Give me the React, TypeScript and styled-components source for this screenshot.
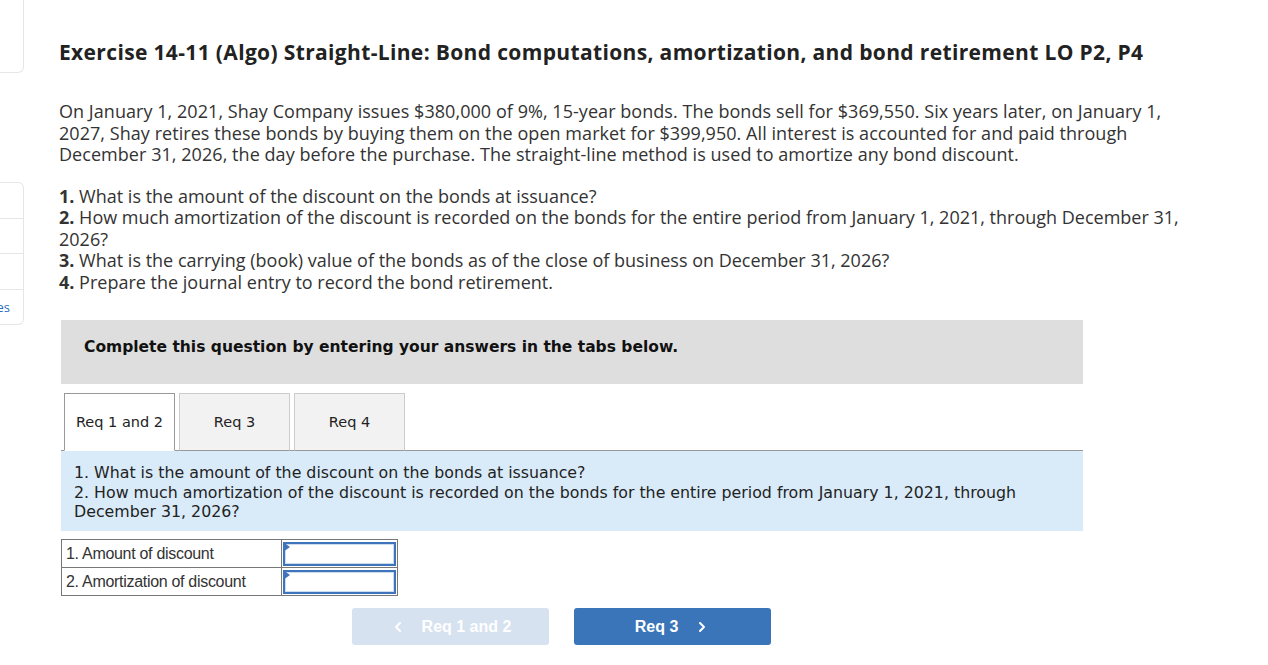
import styled, { createGlobalStyle } from 'styled-components';
import { ChevronLeft, ChevronRight } from 'lucide-react';

const GlobalStyle = createGlobalStyle`
  body {
    margin: 0;
    background: #fff;
    font-family: "Open Sans", "Liberation Sans", sans-serif;
    color: #333;
  }
`;

const Page = styled.div`
  display: flex;
  align-items: flex-start;
  width: 1268px;
  height: 665px;
  overflow: hidden;
`;

const Sidebar = styled.aside`
  width: 24px;
  flex-shrink: 0;
  display: flex;
  flex-direction: column;
`;

const SideCard = styled.div<{ $top: number; $height: number }>`
  margin-top: ${p => p.$top}px;
  height: ${p => p.$height}px;
  border: 1px solid #e6e6e6;
  border-left: none;
  border-radius: 0 6px 6px 0;
  box-sizing: border-box;
  display: flex;
  flex-direction: column;
`;

const SideRow = styled.div`
  flex: 1;
  border-top: 1px solid #e6e6e6;
  display: flex;
  align-items: center;
  justify-content: flex-end;
  overflow: hidden;
  padding-right: 13px;
  font-size: 13px;
  color: #2c6fbb;
  white-space: nowrap;

  &:first-child {
    border-top: none;
  }
`;

const Main = styled.main`
  margin-left: 35px;
  width: 1180px;
  padding-top: 38px;
`;

const Title = styled.h1`
  margin: 0;
  font-size: 21px;
  letter-spacing: 0.35px;
  line-height: 28px;
  font-weight: 700;
  color: #222;
  white-space: nowrap;
`;

const Intro = styled.p`
  margin: 35px 0 0;
  font-size: 18px;
  letter-spacing: 0.05px;
  line-height: 21.5px;
  color: #333;
  white-space: nowrap;
`;

const Questions = styled.ol`
  list-style: none;
  margin: 20px 0 0;
  padding: 0;
  font-size: 18px;
  line-height: 21.5px;
  white-space: nowrap;

  b {
    font-weight: 700;
  }
`;

const Instruction = styled.div`
  margin: 27px 0 0 2px;
  width: 1022px;
  height: 64px;
  box-sizing: border-box;
  background: #dedede;
  padding: 17px 23px;
  font-family: "DejaVu Sans", Verdana, sans-serif;
  font-weight: 700;
  font-size: 15.5px;
  line-height: 20px;
  color: #111;
`;

const Workspace = styled.section`
  margin-left: 2px;
  width: 1022px;
  font-family: "DejaVu Sans", Verdana, sans-serif;
`;

const TabBar = styled.div`
  margin-top: 9px;
  display: flex;
  gap: 4px;
  padding-left: 3px;
  border-bottom: 1px solid #999;
`;

const Tab = styled.button<{ $active?: boolean }>`
  width: 111px;
  height: 58px;
  box-sizing: border-box;
  margin-bottom: -1px;
  border: 1px solid ${p => (p.$active ? '#999' : '#ccc')};
  border-bottom: ${p => (p.$active ? '1px solid #fff' : '1px solid #999')};
  background: ${p => (p.$active ? '#fff' : '#f2f2f2')};
  font-family: inherit;
  font-size: 14.5px;
  color: #222;
  padding: 0;
  cursor: pointer;
`;

const Prompt = styled.div`
  background: #d9ebf9;
  height: 80px;
  box-sizing: border-box;
  padding: 12px 13px;
  font-size: 15.8px;
  line-height: 19.5px;
  color: #222;
  white-space: nowrap;
`;

const AnswerTable = styled.table`
  margin-top: 8px;
  border-collapse: collapse;
  font-family: "Liberation Sans", Arial, sans-serif;
  font-size: 16px;
  color: #333;
`;

const LabelCell = styled.td`
  width: 220px;
  height: 26px;
  box-sizing: border-box;
  border: 1px solid #777;
  padding: 1px 0 0 4px;
  letter-spacing: -0.3px;
`;

const InputCell = styled.td`
  width: 113px;
  height: 25px;
  padding: 1px;
  border: 1px solid #777;
`;

const InputWrap = styled.div`
  position: relative;
`;

const AmountInput = styled.input`
  display: block;
  width: 100%;
  height: 24px;
  box-sizing: border-box;
  border: 2px solid #3f74bb;
  outline: 1px solid #c9dcf1;
  outline-offset: -3px;
  background: #fff;
`;

const Marker = styled.span`
  position: absolute;
  z-index: 1;
  left: 0;
  top: 0;
  width: 0;
  height: 0;
  border-top: 5px solid transparent;
  border-bottom: 5px solid transparent;
  border-left: 7px solid #3f74bb;
`;

const NavRow = styled.div`
  margin: 12px 0 0 291px;
  display: flex;
  gap: 25px;
`;

const NavButton = styled.button<{ $disabled?: boolean }>`
  width: 197px;
  height: 37px;
  border: none;
  border-radius: 3px;
  background: ${p => (p.$disabled ? '#d6e2f0' : '#3a75b9')};
  color: #fff;
  font-family: "Liberation Sans", Arial, sans-serif;
  font-weight: 700;
  font-size: 16px;
  display: flex;
  align-items: center;
  justify-content: center;
  gap: 16px;
  cursor: pointer;
`;

function AnswerRow({ label }: { label: string }) {
  return (
    <tr>
      <LabelCell>{label}</LabelCell>
      <InputCell>
        <InputWrap>
          <AmountInput aria-label={label} />
          <Marker />
        </InputWrap>
      </InputCell>
    </tr>
  );
}

export default function App() {
  return (
    <Page>
      <GlobalStyle />
      <Sidebar>
        <SideCard $top={-10} $height={83} />
        <SideCard $top={109} $height={143}>
          <SideRow />
          <SideRow />
          <SideRow />
          <SideRow>Notes</SideRow>
        </SideCard>
      </Sidebar>
      <Main>
        <Title>
          Exercise 14-11 (Algo) Straight-Line: Bond computations, amortization, and bond retirement LO P2, P4
        </Title>
        <Intro>
          On January 1, 2021, Shay Company issues $380,000 of 9%, 15-year bonds. The bonds sell for $369,550. Six years later, on January 1,
          <br />
          2027, Shay retires these bonds by buying them on the open market for $399,950. All interest is accounted for and paid through
          <br />
          December 31, 2026, the day before the purchase. The straight-line method is used to amortize any bond discount.
        </Intro>
        <Questions>
          <li><b>1.</b> What is the amount of the discount on the bonds at issuance?</li>
          <li>
            <b>2.</b> How much amortization of the discount is recorded on the bonds for the entire period from January 1, 2021, through December 31,
            <br />
            2026?
          </li>
          <li><b>3.</b> What is the carrying (book) value of the bonds as of the close of business on December 31, 2026?</li>
          <li><b>4.</b> Prepare the journal entry to record the bond retirement.</li>
        </Questions>
        <Instruction>Complete this question by entering your answers in the tabs below.</Instruction>
        <Workspace>
          <TabBar>
            <Tab $active>Req 1 and 2</Tab>
            <Tab>Req 3</Tab>
            <Tab>Req 4</Tab>
          </TabBar>
          <Prompt>
            1. What is the amount of the discount on the bonds at issuance?
            <br />
            2. How much amortization of the discount is recorded on the bonds for the entire period from January 1, 2021, through
            <br />
            December 31, 2026?
          </Prompt>
          <AnswerTable>
            <tbody>
              <AnswerRow label="1. Amount of discount" />
              <AnswerRow label="2. Amortization of discount" />
            </tbody>
          </AnswerTable>
          <NavRow>
            <NavButton $disabled>
              <ChevronLeft size={16} strokeWidth={3} />
              <span>Req 1 and 2</span>
            </NavButton>
            <NavButton>
              <span>Req 3</span>
              <ChevronRight size={16} strokeWidth={3} />
            </NavButton>
          </NavRow>
        </Workspace>
      </Main>
    </Page>
  );
}
